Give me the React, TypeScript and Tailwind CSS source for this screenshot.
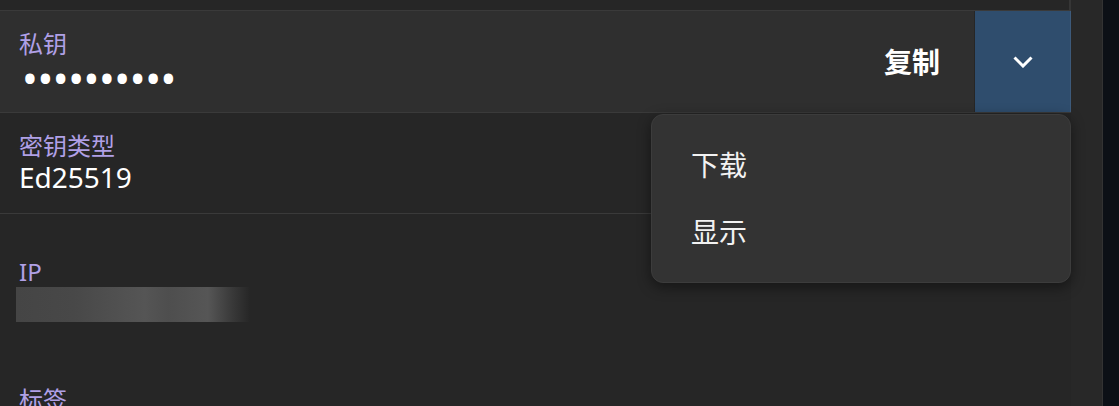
import React from "react";

const font = { fontFamily: '"Noto Sans", "Noto Sans CJK SC", sans-serif' };

function Label({ children }: { children: React.ReactNode }) {
  return <div className="text-[24px] leading-[24px] text-[#b0a0e6]">{children}</div>;
}

export default function App() {
  return (
    <div className="relative flex h-[406px] w-[1119px] overflow-hidden bg-[#262626]" style={font}>
      <div className="flex w-[1071px] shrink-0 flex-col">
        <div className="flex h-[11px] shrink-0 border-b border-[#3a3a3a]">
          <div className="flex-1" />
          <div className="w-[2px] bg-[#363636]" />
        </div>
        <div className="flex h-[102px] shrink-0 items-stretch border-b border-[#3a3a3a] bg-[#2f2f2f]">
          <div className="flex flex-1 flex-col pl-[19px] pt-[21px]">
            <Label>私钥</Label>
            <div className="ml-[3px] mt-[5px] text-[42px] leading-[34px] tracking-[-0.4px] text-white">••••••••••</div>
          </div>
          <div className="flex items-center pr-[34px] text-[28px] font-bold leading-[34px] text-white">复制</div>
          <div className="flex w-[97px] items-center justify-center border-l border-[#262626] border-r border-r-[#3d5a7a] bg-[#2f4d6d]">
            <svg width="20" height="12" viewBox="0 0 20 12" fill="none">
              <polyline points="1.5,1.5 10,10 18.5,1.5" stroke="white" strokeWidth="3" strokeLinecap="butt" strokeLinejoin="miter" />
            </svg>
          </div>
        </div>
        <div className="flex h-[101px] shrink-0 flex-col border-b border-[#3a3a3a] pl-[19px] pt-[21px]">
          <Label>密钥类型</Label>
          <div className="mt-[2px] text-[28px] leading-[34px] text-white">Ed25519</div>
        </div>
        <div className="flex shrink-0 flex-col pl-[19px] pt-[46px]">
          <Label>IP</Label>
          <div className="-ml-[3px] mt-[3px] h-[35px] w-[234px] bg-[linear-gradient(90deg,#454545_0%,#484848_25%,#4f4f4f_40%,#555555_55%,#4e4e4e_65%,#565656_82%,#3a3a3a_92%,#262626_100%)]" />
          <div className="mt-[66px]">
            <Label>标签</Label>
          </div>
        </div>
      </div>
      <div className="w-[31px] shrink-0 bg-[#282828]" />
      <div className="w-[1px] shrink-0 bg-[#333333]" />
      <div className="flex-1 bg-[#0c1016]" />

      <div className="absolute left-[651px] top-[114px] flex h-[169px] w-[420px] flex-col rounded-[12px] border border-[#3c3c3c] bg-[#333333] py-[16px] shadow-[0_4px_14px_rgba(0,0,0,0.45)]">
        <div className="flex h-[68px] items-center pl-[39px] text-[28px] leading-[34px] text-[#f2f2f2]">下载</div>
        <div className="flex h-[68px] items-center pl-[39px] text-[28px] leading-[34px] text-[#f2f2f2]">显示</div>
      </div>
    </div>
  );
}
